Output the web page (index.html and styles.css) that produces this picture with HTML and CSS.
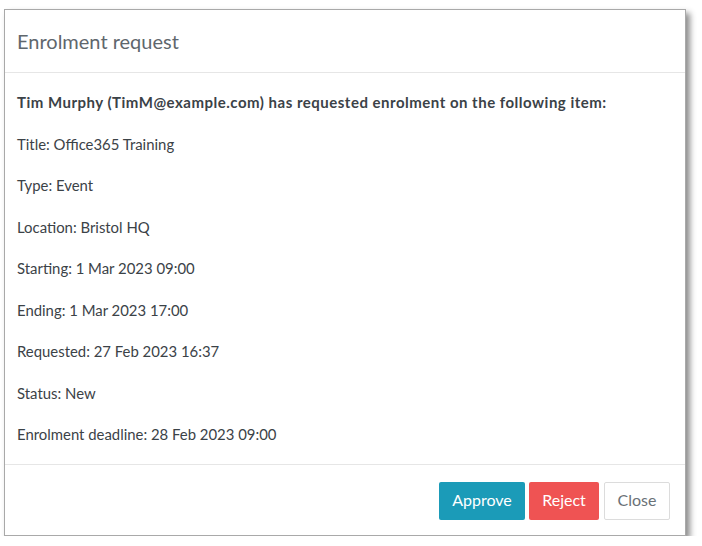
FILE: index.html
```html
<!DOCTYPE html>
<html lang="en">
  <head>
    <meta charset="UTF-8" />
    <title>Enrolment request</title>
    <link rel="stylesheet" href="styles.css">
  </head>
  <body>
    <div class="modal">
      <div class="modal_head">
        <h1 class="modal_title">Enrolment request</h1>
      </div>
      <div class="modal_body">
        <p class="lead">Tim Murphy (TimM@example.com) has requested enrolment on the following item:</p>
        <p>Title: Office365 Training</p>
        <p>Type: Event</p>
        <p>Location: Bristol HQ</p>
        <p>Starting: 1 Mar 2023 09:00</p>
        <p>Ending: 1 Mar 2023 17:00</p>
        <p>Requested: 27 Feb 2023 16:37</p>
        <p>Status: New</p>
        <p>Enrolment deadline: 28 Feb 2023 09:00</p>
      </div>
      <div class="modal_foot">
        <button class="btn btn_approve">Approve</button>
        <button class="btn btn_reject">Reject</button>
        <button class="btn btn_close">Close</button>
      </div>
    </div>
  </body>
</html>
```

FILE: styles.css
```css
body {
  margin: 0;
  background-color: white;
  font-family: Lato, "Liberation Sans", sans-serif;
  color: #3b4247;
}

.modal {
  margin: 9px 0 0 4px;
  width: 680px;
  border: 1px solid #a9a9a9;
  background-color: white;
  box-shadow: 4px 4px 6px rgba(0, 0, 0, 0.45);
}

.modal_head {
  height: 62px;
  display: flex;
  align-items: center;
  padding: 0 12px;
  border-bottom: 1px solid #e6e6e6;
}

.modal_title {
  margin: 0;
  font-size: 20px;
  font-weight: normal;
  color: #5f676d;
}

.modal_body {
  display: flex;
  flex-direction: column;
  gap: 21.5px;
  padding: 19px 12px 20px;
  border-bottom: 1px solid #e6e6e6;
}

.modal_body p {
  margin: 0;
  font-size: 14.9px;
  line-height: 20px;
}

.modal_body .lead {
  font-size: 15px;
  font-weight: bold;
  letter-spacing: 0.5px;
}

.modal_foot {
  display: flex;
  justify-content: flex-end;
  gap: 4px;
  padding: 17px 15px 15px;
}

.btn {
  height: 38px;
  padding: 0 0 3px;
  font-family: inherit;
  font-size: 16px;
  border-radius: 2px;
  border: 1px solid transparent;
  color: white;
}

.btn_approve {
  width: 86px;
  background-color: #1b9bb8;
}

.btn_reject {
  width: 70px;
  background-color: #ef5353;
}

.btn_close {
  width: 66px;
  margin-left: 1px;
  background-color: white;
  border-color: #dcdcdc;
  color: #6a7177;
}
```
